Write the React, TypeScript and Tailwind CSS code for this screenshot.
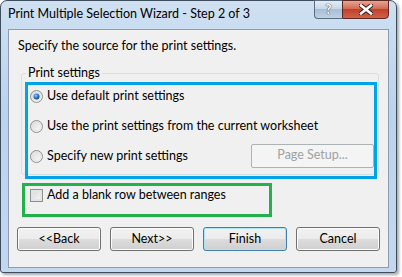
import React from "react";

const font = "font-['Segoe_UI','Lato',sans-serif]";

const Radio = ({ checked }: { checked?: boolean }) => (
  <svg width="13" height="13" viewBox="0 0 13 13" className="shrink-0">
    <defs>
      <linearGradient id="rbg" x1="0" y1="0" x2="1" y2="1">
        <stop offset="0" stopColor="#d6d6d6" />
        <stop offset="1" stopColor="#ffffff" />
      </linearGradient>
      <radialGradient id="rdot" cx="0.4" cy="0.35" r="0.7">
        <stop offset="0" stopColor="#8fd0ff" />
        <stop offset="0.5" stopColor="#2c7fd0" />
        <stop offset="1" stopColor="#0d3e78" />
      </radialGradient>
    </defs>
    <circle cx="6.5" cy="6.5" r="6" fill="url(#rbg)" stroke="#8e8f8f" />
    <circle cx="6.5" cy="6.5" r="4.5" fill="none" stroke="#e2e2e2" />
    {checked && <circle cx="6.5" cy="6.5" r="3" fill="url(#rdot)" />}
  </svg>
);

const Button = ({ label, primary }: { label: string; primary?: boolean }) => (
  <div
    className={`w-[84px] h-[24px] rounded-[3px] border flex items-center justify-center text-[12.5px] text-black ${
      primary
        ? "border-[#3c7fb1] shadow-[inset_0_0_0_1px_#aee4f8]"
        : "border-[#707070] shadow-[inset_0_0_0_1px_#fcfcfc]"
    } bg-[linear-gradient(#f2f2f2_0%,#ebebeb_50%,#dddddd_50%,#cfcfcf_100%)]`}
  >
    {label}
  </div>
);

export default function App() {
  return (
    <div className={`w-[402px] h-[277px] bg-white ${font}`}>
      <div className="w-[397px] h-[273px] rounded-t-[7px] rounded-b-[3px] border border-[#3d4d5e] bg-[linear-gradient(#cfe0f2,#bcd3ec_40%,#c3d8ee)] shadow-[2px_2px_3px_rgba(0,0,0,0.35)] flex flex-col px-[7px]">
        {/* title bar */}
        <div className="h-[28px] flex justify-between shrink-0">
          <div className="pt-[5px] text-[12.5px] leading-[16px] text-black">
            Print Multiple Selection Wizard - Step 2 of 3
          </div>
          <div className="flex -mt-[1px] h-[19px]">
            <div className="w-[28px] h-[19px] rounded-bl-[4px] border border-[#5b6d80] border-r-0 bg-[linear-gradient(#e4edf6,#c8d8e9_45%,#a9bfd6_50%,#bcd1e6)] flex items-center justify-center">
              <span className="text-white font-bold text-[13px] leading-none [text-shadow:0_0_1px_#2a3a4a,0_0_1px_#2a3a4a]">
                ?
              </span>
            </div>
            <div className="w-[47px] h-[19px] rounded-br-[4px] border border-[#5a2a24] bg-[linear-gradient(#e8a493,#d36b55_45%,#c2412b_50%,#d0604a)] flex items-center justify-center">
              <svg width="14" height="11" viewBox="0 0 14 11">
                <path d="M2 1.5 L12 9.5 M12 1.5 L2 9.5" stroke="#3a1a14" strokeWidth="4.5" strokeLinecap="square" />
                <path d="M2 1.5 L12 9.5 M12 1.5 L2 9.5" stroke="#ffffff" strokeWidth="2.6" strokeLinecap="square" />
              </svg>
            </div>
          </div>
        </div>

        {/* client area */}
        <div className="relative h-[239px] border border-[#8a9db3] bg-[#f0f0f0] text-[12.5px] text-black">
          <div className="pl-[9px] pt-[8px] leading-[16px]">
            Specify the source for the print settings.
          </div>

          {/* group box */}
          <div className="mt-[19px] ml-[12px] w-[358px] border border-[#d5dfe5] rounded-[3px] pb-[3px]">
            <div className="-mt-[9px] ml-[4px] px-[2px] w-fit bg-[#f0f0f0] leading-[16px]">
              Print settings
            </div>
            <div className="h-[30px] flex items-center gap-[4px] pl-[8px]">
              <Radio checked />
              <span>Use default print settings</span>
            </div>
            <div className="h-[30px] flex items-center gap-[4px] pl-[8px]">
              <Radio />
              <span>Use the print settings from the current worksheet</span>
            </div>
            <div className="h-[30px] flex items-center justify-between pl-[8px] pr-[4px]">
              <div className="flex items-center gap-[4px]">
                <Radio />
                <span>Specify new print settings</span>
              </div>
              <div className="w-[123px] h-[24px] -mt-[1px] border border-[#adb2b5] rounded-[2px] bg-[#f4f4f4] flex items-center justify-center text-[#a0a0a0]">
                Page Setup...
              </div>
            </div>
          </div>

          {/* checkbox */}
          <div className="mt-[12px] ml-[21px] h-[16px] flex items-center gap-[4px]">
            <div className="w-[13px] h-[13px] border border-[#8e8f8f] bg-[linear-gradient(135deg,#d8d8d8,#f6f6f6)] shadow-[inset_0_0_0_2px_#e4e4e4] shrink-0" />
            <span>Add a blank row between ranges</span>
          </div>

          {/* buttons */}
          <div className="mt-[24px] ml-[8px] flex gap-[9px]">
            <Button label="<<Back" />
            <Button label="Next>>" />
            <Button label="Finish" primary />
            <Button label="Cancel" />
          </div>

          {/* annotation boxes */}
          <div className="absolute left-[16px] top-[52px] w-[352px] h-[97px] border-[3px] border-[#00a2e8] pointer-events-none" />
          <div className="absolute left-[13px] top-[153px] w-[250px] h-[34px] border-[3px] border-[#22b14c] pointer-events-none" />
        </div>
      </div>
    </div>
  );
}
